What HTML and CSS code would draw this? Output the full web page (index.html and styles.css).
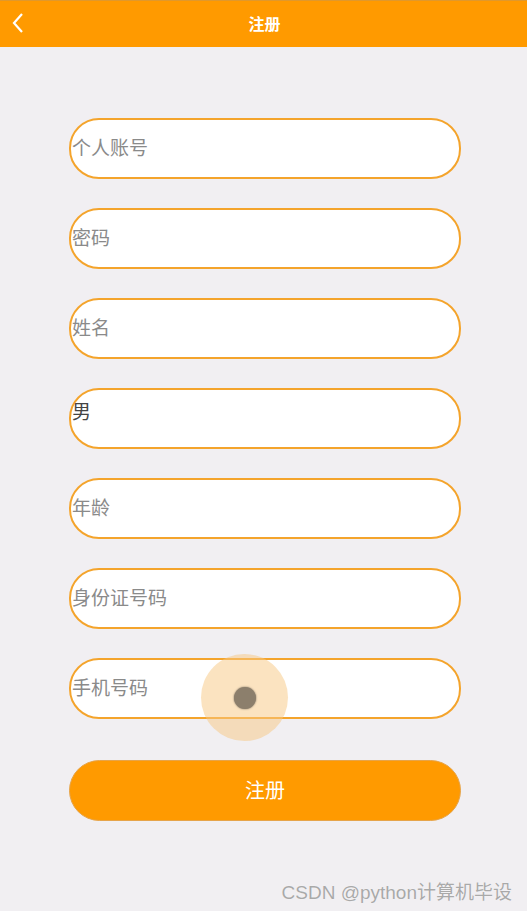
FILE: index.html
```html
<!DOCTYPE html>
<html lang="zh">
<head>
    <meta charset="UTF-8">
    <meta name="viewport" content="width=device-width, initial-scale=1.0">
    <title>注册</title>
    <link rel="stylesheet" href="styles.css">
</head>
<body>
<div class="header">
    <span class="back">
        <svg width="14" height="22" viewBox="0 0 14 22"><path d="M11 2 L3 11 L11 20" fill="none" stroke="#fff" stroke-width="2.2"/></svg>
    </span>
    <span class="title">注册</span>
</div>

<div class="form">
    <div class="field"><span class="placeholder">个人账号</span></div>
    <div class="field"><span class="placeholder">密码</span></div>
    <div class="field"><span class="placeholder">姓名</span></div>
    <div class="field picker"><span class="value">男</span></div>
    <div class="field"><span class="placeholder">年龄</span></div>
    <div class="field"><span class="placeholder">身份证号码</span></div>
    <div class="field"><span class="placeholder">手机号码</span></div>
    <button class="submit">注册</button>
</div>

<div class="touch"><div class="dot"></div></div>

<div class="watermark">CSDN @python计算机毕设</div>
</body>
</html>
```

FILE: styles.css
```css
body {
    margin: 0;
    background-color: #f1eff2;
    font-family: "Noto Sans CJK SC", "Liberation Sans", sans-serif;
    width: 527px;
    height: 911px;
    position: relative;
    overflow: hidden;
}
.header {
    height: 46px;
    background-color: #ff9a00;
    border-top: 1px solid #e0982c;
    display: flex;
    align-items: center;
    justify-content: center;
    position: relative;
}
.header .back {
    position: absolute;
    left: 11px;
    top: 11px;
}
.header .title {
    color: #fff;
    font-size: 16px;
    font-weight: bold;
    margin-bottom: 3px;
    margin-left: 2px;
}
.form {
    padding: 71px 66px 0 69px;
    display: flex;
    flex-direction: column;
    gap: 29px;
}
.field {
    height: 57px;
    border: 2px solid #f4a42c;
    border-radius: 30px;
    background: #fff;
    display: flex;
    align-items: center;
}
.field .placeholder {
    color: #8a8a8a;
    font-size: 19px;
    padding-left: 1px;
    margin-bottom: 4px;
}
.field.picker {
    align-items: flex-start;
}
.field .value {
    color: #444;
    font-size: 19px;
    padding-left: 1px;
    margin-top: 7px;
}
.submit {
    margin-top: 12px;
    height: 61px;
    border: 1px solid #e6a44a;
    border-radius: 31px;
    background-color: #ff9a00;
    color: #fff;
    font-family: inherit;
    font-size: 20px;
    padding-bottom: 4px;
}
.touch {
    position: absolute;
    left: 201px;
    top: 654px;
    width: 87px;
    height: 87px;
    border-radius: 50%;
    background: rgba(248, 200, 130, 0.5);
    display: flex;
    align-items: center;
    justify-content: center;
}
.touch .dot {
    width: 22px;
    height: 22px;
    border-radius: 50%;
    background: #8c7f6c;
    box-shadow: 0 0 2px #6d6355;
}
.watermark {
    position: absolute;
    right: 15px;
    top: 877px;
    color: #a9a9a9;
    font-family: "Liberation Sans", "Noto Sans CJK SC", sans-serif;
    font-size: 19px;
    text-shadow: 0 0 1px #fff;
}
```
